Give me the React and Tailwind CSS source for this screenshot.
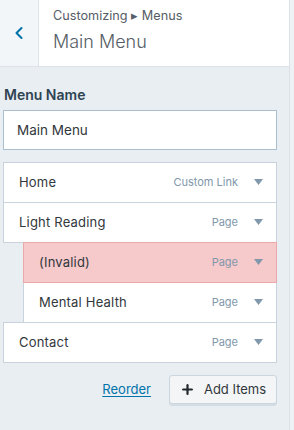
import React from 'react';
import { ChevronLeft, Plus } from 'lucide-react';

const items = [
  { title: 'Home', type: 'Custom Link', depth: 0 },
  { title: 'Light Reading', type: 'Page', depth: 0 },
  { title: '(Invalid)', type: 'Page', depth: 1, invalid: true },
  { title: 'Mental Health', type: 'Page', depth: 1 },
  { title: 'Contact', type: 'Page', depth: 0 },
];

const MenuItem = ({ item, first }) => (
  <div
    className={`flex items-center h-[41px] border ${first ? '' : '-mt-px'} ${
      item.depth ? 'ml-[20px]' : ''
    } ${item.invalid ? 'bg-[#f6c9cb] border-[#e9a9ab] relative' : 'bg-white border-[#c8d3dd]'}`}
  >
    <span className="flex-1 pl-[15px] text-[13px] text-[#32373c] tracking-[0.2px]">{item.title}</span>
    <span className="text-[11px] text-[#8197ab]">{item.type}</span>
    <svg width="9" height="7" viewBox="0 0 9 7" className="ml-[16px] mr-[13px]">
      <path d="M0 0 L9 0 L4.5 6 Z" fill="#8197ab" />
    </svg>
  </div>
);

const App = () => {
  return (
    <div className="w-[294px] h-[430px] flex bg-[#eef2f5] overflow-hidden" style={{ fontFamily: 'Inter, "Noto Sans", sans-serif' }}>
      <div className="w-[290px] border-r border-[#dce2e7] bg-[#e9eef2] flex flex-col">
        {/* Header */}
        <div className="flex h-[67px] border-b border-[#dde3e8] bg-white">
          <div className="w-[39px] bg-[#f3f6f9] border-r border-[#dde5ec] flex items-center justify-center">
            <ChevronLeft className="w-[20px] h-[20px] text-[#0073aa]" strokeWidth={2.5} />
          </div>
          <div className="flex-1 pl-[14px] pt-[6px]">
            <div className="text-[12.7px] text-[#555d66]">Customizing ▸ Menus</div>
            <div className="text-[18px] font-light text-[#555d66] mt-[3px] leading-[28px]">Main Menu</div>
          </div>
        </div>

        {/* Menu name */}
        <div className="px-[3px] pr-[12px]">
          <div className="mt-[17px] text-[14px] font-semibold text-[#2e4453] pl-[1px]">Menu Name</div>
          <div className="mt-[5px] h-[40px] bg-white border border-[#a9bfd0] flex items-center pl-[13px] text-[13.5px] text-[#32373c]">
            Main Menu
          </div>

          {/* Items */}
          <div className="mt-[12px] flex flex-col">
            {items.map((item, i) => (
              <MenuItem key={item.title} item={item} first={i === 0} />
            ))}
          </div>

          {/* Actions */}
          <div className="mt-[12px] flex items-center justify-end gap-[18px]">
            <a className="text-[13px] text-[#0073aa] underline underline-offset-2">Reorder</a>
            <button className="h-[29px] w-[108px] flex items-center justify-center gap-[9px] bg-[#f3f5f6] border border-[#ccd6df] rounded-[3px] shadow-[0_2px_0_#d5dde4] text-[13px] text-[#32373c]">
              <Plus className="w-[15px] h-[15px] text-[#23282d]" strokeWidth={3.5} />
              Add Items
            </button>
          </div>
        </div>
      </div>
    </div>
  );
};

export default App;
